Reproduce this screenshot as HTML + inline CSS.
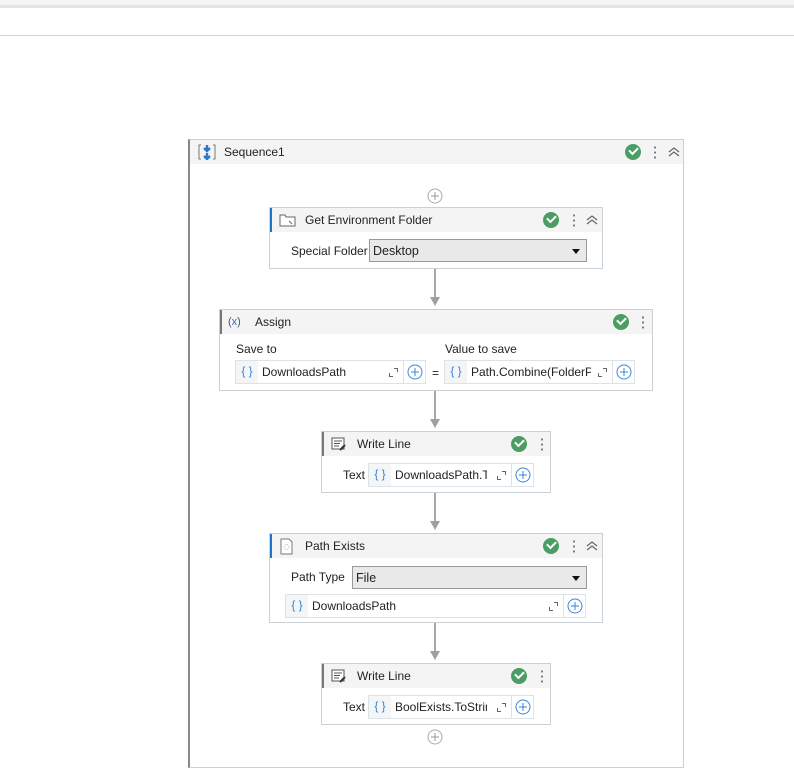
<!DOCTYPE html>
<html><head><style>
*{box-sizing:border-box;margin:0;padding:0}
body{width:794px;height:777px;background:#fff;position:relative;overflow:hidden;font-family:"Liberation Sans",sans-serif;font-size:12px;color:#222}
.a{position:absolute}
.box{position:absolute;border:1px solid #c9d1d6;background:#fff}
.hd{position:absolute;left:0;right:0;top:0;height:24px;background:#f4f4f4}
.hd.blue{border-left:2px solid #1f73c9}
.hd.gray{border-left:2px solid #777}
.t{position:absolute;font-size:12px;color:#222;white-space:nowrap}
.chk{position:absolute;width:16px;height:16px;border-radius:50%;background:#4a9e63}
.chk:after{content:"";position:absolute;left:4px;top:3px;width:7px;height:4px;border-left:2px solid #fff;border-bottom:2px solid #fff;transform:rotate(-45deg)}
.dots{position:absolute;width:2px;height:14px;background:radial-gradient(circle,#777 1px,transparent 1.2px) 0 0/2px 5px repeat-y}
.fld{position:absolute;border:1px solid #dde2e6;height:24px;background:#fff;font-size:12px}
.br{position:absolute;left:0;top:0;width:22px;height:22px;background:#f3f5f7;color:#3a86d6;text-align:center;line-height:21px;font-size:12px}
.pl{position:absolute;top:0;right:0;width:22px;height:22px;border-left:1px solid #dde2e6}
.pl svg{position:absolute;left:3px;top:3px}
.ex{position:absolute;top:7px;width:9px;height:9px}
.ex:before{content:"";position:absolute;left:0;bottom:0;width:3px;height:3px;border-left:1px solid #666;border-bottom:1px solid #666}
.ex:after{content:"";position:absolute;right:0;top:0;width:3px;height:3px;border-right:1px solid #666;border-top:1px solid #666}
.dd{position:absolute;height:23px;border:1px solid #999;background:#e9e9e9;padding-left:3px;line-height:23px;font-size:12.5px}
.dd:after{content:"";position:absolute;right:6px;top:9px;border:4px solid transparent;border-top:5px solid #111}
.line{position:absolute;left:434px;width:2px;background:#a8a8a8}
.arr{position:absolute;left:430px;border:5px solid transparent;border-top:9px solid #a0a0a0}
.plus{position:absolute}
.chev{position:absolute}
</style></head><body>
<svg width="0" height="0" style="position:absolute"><defs>
<symbol id="pb" viewBox="0 0 16 16"><circle cx="8" cy="8" r="7" fill="none" stroke="#3a86d6"/><path d="M8 4V12M4 8H12" stroke="#3a86d6"/></symbol>
<symbol id="pg" viewBox="0 0 16 16"><circle cx="8" cy="8" r="7" fill="none" stroke="#aaa"/><path d="M8 4V12M4 8H12" stroke="#999"/></symbol>
<symbol id="ch" viewBox="0 0 12 12"><path d="M1 6L6 2L11 6M1 10L6 6L11 10" fill="none" stroke="#666" stroke-width="1.2"/></symbol>
</defs></svg>
<div class="a" style="left:0;top:0;width:794px;height:5px;background:#f4f5f4"></div>
<div class="a" style="left:0;top:5px;width:794px;height:3px;background:#e4e4e4"></div>
<div class="a" style="left:0;top:35px;width:794px;height:1px;background:#d0d4d3"></div>

<!-- Sequence -->
<div class="box" style="left:188px;top:139px;width:496px;height:629px;border-left:2px solid #888">
 <div class="hd"></div>
 <svg class="a" style="left:8px;top:4px" width="18" height="16" viewBox="0 0 18 16"><path d="M3 1H1V15H3M15 1H17V15H15" stroke="#777" fill="none"/><path d="M9 1V6M6 4L9 7L12 4M9 9V14M6 12L9 15L12 12" stroke="#2a78d0" stroke-width="2.4" fill="none"/></svg>
 <div class="t" style="left:34px;top:5px">Sequence1</div>
 <div class="chk" style="left:435px;top:4px"></div>
 <div class="dots" style="left:464px;top:5px"></div>
 <svg class="chev" style="left:478px;top:6px" width="12" height="12"><use href="#ch"/></svg>
</div>
<svg class="plus" style="left:427px;top:188px" width="16" height="16"><use href="#pg"/></svg>

<!-- Get Env Folder -->
<div class="box" style="left:269px;top:207px;width:334px;height:62px">
 <div class="hd blue"></div>
 <svg class="a" style="left:9px;top:6px" width="17" height="13" viewBox="0 0 17 13"><path d="M1 1H6L7 3H16V12H1Z" stroke="#666" fill="#fff"/><path d="M10 7L13 10" stroke="#666"/></svg>
 <div class="t" style="left:35px;top:5px">Get Environment Folder</div>
 <div class="chk" style="left:273px;top:4px"></div>
 <div class="dots" style="left:303px;top:5px"></div>
 <svg class="chev" style="left:316px;top:6px" width="12" height="12"><use href="#ch"/></svg>
 <div class="t" style="left:21px;top:36px">Special Folder</div>
 <div class="dd" style="left:99px;top:31px;width:218px">Desktop</div>
</div>
<div class="line" style="top:269px;height:30px"></div><div class="arr" style="top:297px"></div>

<!-- Assign -->
<div class="box" style="left:219px;top:309px;width:434px;height:82px">
 <div class="hd gray"></div>
 <div class="t" style="left:8px;top:6px;font-size:11px;color:#555">(<span style="color:#2a6fc0">x</span>)</div>
 <div class="t" style="left:35px;top:5px">Assign</div>
 <div class="chk" style="left:393px;top:4px"></div>
 <div class="dots" style="left:422px;top:5px"></div>
 <div class="t" style="left:16px;top:32px">Save to</div>
 <div class="t" style="left:225px;top:32px">Value to save</div>
 <div class="fld" style="left:15px;top:50px;width:191px"><div class="br">{ }</div><div class="t" style="left:26px;top:4px">DownloadsPath</div><div class="ex" style="left:153px"></div><div class="pl"><svg width="16" height="16"><use href="#pb"/></svg></div></div>
 <div class="t" style="left:212px;top:56px">=</div>
 <div class="fld" style="left:224px;top:50px;width:191px"><div class="br">{ }</div><div class="t" style="left:26px;top:4px;width:120px;overflow:hidden">Path.Combine(FolderP</div><div class="ex" style="left:153px"></div><div class="pl"><svg width="16" height="16"><use href="#pb"/></svg></div></div>
</div>
<div class="line" style="top:391px;height:30px"></div><div class="arr" style="top:419px"></div>

<!-- Write Line 1 -->
<div class="box" style="left:321px;top:431px;width:230px;height:62px">
 <div class="hd gray"></div>
 <svg class="a" style="left:9px;top:5px" width="16" height="15" viewBox="0 0 16 15"><rect x="1" y="1" width="12" height="11" fill="#fff" stroke="#555"/><path d="M3 4H11M3 6.5H9M3 9H8" stroke="#555"/><path d="M9 13L14 8" stroke="#333" stroke-width="2"/></svg>
 <div class="t" style="left:35px;top:5px">Write Line</div>
 <div class="chk" style="left:189px;top:4px"></div>
 <div class="dots" style="left:219px;top:5px"></div>
 <div class="t" style="left:21px;top:36px">Text</div>
 <div class="fld" style="left:46px;top:31px;width:166px"><div class="br">{ }</div><div class="t" style="left:26px;top:4px;width:92px;overflow:hidden">DownloadsPath.ToString</div><div class="ex" style="left:128px"></div><div class="pl"><svg width="16" height="16"><use href="#pb"/></svg></div></div>
</div>
<div class="line" style="top:493px;height:30px"></div><div class="arr" style="top:521px"></div>

<!-- Path Exists -->
<div class="box" style="left:269px;top:533px;width:334px;height:90px">
 <div class="hd blue"></div>
 <svg class="a" style="left:10px;top:4px" width="13" height="17" viewBox="0 0 13 17"><path d="M1 1H9L12 4V16H1Z" fill="#fff" stroke="#777"/><circle cx="6.5" cy="9" r="2.5" fill="none" stroke="#bbb" stroke-dasharray="1 1"/></svg>
 <div class="t" style="left:35px;top:5px">Path Exists</div>
 <div class="chk" style="left:273px;top:4px"></div>
 <div class="dots" style="left:303px;top:5px"></div>
 <svg class="chev" style="left:316px;top:6px" width="12" height="12"><use href="#ch"/></svg>
 <div class="t" style="left:21px;top:36px">Path Type</div>
 <div class="dd" style="left:82px;top:32px;width:235px">File</div>
 <div class="fld" style="left:15px;top:60px;width:301px"><div class="br">{ }</div><div class="t" style="left:26px;top:4px">DownloadsPath</div><div class="ex" style="left:263px"></div><div class="pl"><svg width="16" height="16"><use href="#pb"/></svg></div></div>
</div>
<div class="line" style="top:623px;height:30px"></div><div class="arr" style="top:651px"></div>

<!-- Write Line 2 -->
<div class="box" style="left:321px;top:663px;width:230px;height:62px">
 <div class="hd gray"></div>
 <svg class="a" style="left:9px;top:5px" width="16" height="15" viewBox="0 0 16 15"><rect x="1" y="1" width="12" height="11" fill="#fff" stroke="#555"/><path d="M3 4H11M3 6.5H9M3 9H8" stroke="#555"/><path d="M9 13L14 8" stroke="#333" stroke-width="2"/></svg>
 <div class="t" style="left:35px;top:5px">Write Line</div>
 <div class="chk" style="left:189px;top:4px"></div>
 <div class="dots" style="left:219px;top:5px"></div>
 <div class="t" style="left:21px;top:36px">Text</div>
 <div class="fld" style="left:46px;top:31px;width:166px"><div class="br">{ }</div><div class="t" style="left:26px;top:4px;width:92px;overflow:hidden">BoolExists.ToString</div><div class="ex" style="left:128px"></div><div class="pl"><svg width="16" height="16"><use href="#pb"/></svg></div></div>
</div>
<svg class="plus" style="left:427px;top:729px" width="16" height="16"><use href="#pg"/></svg>
</body></html>
